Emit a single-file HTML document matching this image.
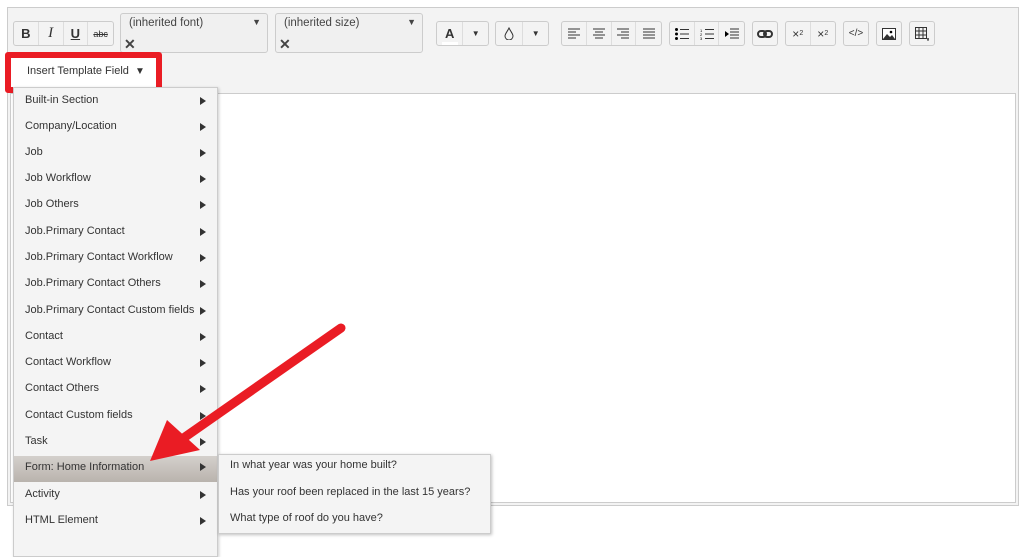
<!DOCTYPE html>
<html><head><meta charset="utf-8"><style>
*{box-sizing:border-box;margin:0;padding:0}
body{width:1031px;height:538px;background:#fff;position:relative;overflow:hidden;font-family:"Liberation Sans",sans-serif;color:#333}
.abs{position:absolute}
.panel{left:7px;top:7px;width:1012px;height:499px;background:#f3f3f3;border:1px solid #ccc}
.editor{left:10px;top:93px;width:1006px;height:410px;background:#fff;border:1px solid #ccc}
.grp{position:absolute;top:21px;height:25px;border:1px solid #ccc;border-radius:3px;background:#f3f3f3;display:flex}
.grp div{width:25px;height:23px;border-right:1px solid #ddd;display:flex;align-items:center;justify-content:center;font-size:13px;color:#333}
.grp div:last-child{border-right:none}
.sel{position:absolute;top:13px;height:40px;width:148px;border:1px solid #ccc;border-radius:3px;background:#f0f0f0;font-size:11.5px;color:#444}
.sel .t{position:absolute;left:8px;top:3px}
.sel .a{position:absolute;right:6px;top:3px;font-size:9px}
.sel .x{position:absolute;left:3px;top:22px;font-size:14px;font-weight:bold}
.menu{left:13px;top:87px;width:205px;height:470px;background:#f4f4f4;border:1px solid #ccc;box-shadow:1px 1px 3px rgba(0,0,0,.2)}
.mi{position:absolute;left:0;width:203px;height:26px;font-size:11px;color:#333;padding-left:11px;line-height:20px;white-space:nowrap}
.mi:after{content:"";position:absolute;right:11px;top:7px;border-left:6px solid #333;border-top:4px solid transparent;border-bottom:4px solid transparent}
.hi{background:linear-gradient(#d4d0cc,#b9b3ad)}
.sub{left:218px;top:454px;width:273px;height:80px;background:#f4f4f4;border:1px solid #ccc;box-shadow:1px 1px 3px rgba(0,0,0,.25)}
.si{position:absolute;left:11px;font-size:11px;color:#333;white-space:nowrap}
</style></head><body>
<div class="abs panel"></div>
<div class="abs editor"></div>
<div class="grp" style="left:13px;width:101px"><div style="font-weight:bold">B</div><div style="font-style:italic;font-family:'Liberation Serif',serif;font-size:15px">I</div><div style="text-decoration:underline;font-weight:bold">U</div><div style="text-decoration:line-through;font-size:9px">abc</div></div>
<div class="sel" style="left:120px"><span class="t">(inherited font)</span><span class="a">▼</span><span class="x">✕</span></div>
<div class="sel" style="left:275px"><span class="t">(inherited size)</span><span class="a">▼</span><span class="x">✕</span></div>
<div class="grp" style="left:436px;width:53px"><div style="font-weight:bold;width:27px;flex-direction:column;padding-top:3px">A<span style="display:block;width:16px;height:3px;background:#fff;margin-top:1px"></span></div><div style="font-size:8px">▼</div></div>
<div class="grp" style="left:495px;width:54px"><div style="width:28px"><svg width="10" height="13"><path d="M5 1C3 5 1 7 1 9a4 4 0 0 0 8 0C9 7 7 5 5 1z" fill="none" stroke="#333"/></svg></div><div style="font-size:8px">▼</div></div>
<div class="grp" style="left:561px;width:101px">
<div><svg width="12" height="11"><path d="M0 1h12M0 4h8M0 7h12M0 10h8" stroke="#333"/></svg></div>
<div><svg width="12" height="11"><path d="M0 1h12M2 4h8M0 7h12M2 10h8" stroke="#333"/></svg></div>
<div><svg width="12" height="11"><path d="M0 1h12M4 4h8M0 7h12M4 10h8" stroke="#333"/></svg></div>
<div><svg width="12" height="11"><path d="M0 1h12M0 4h12M0 7h12M0 10h12" stroke="#333"/></svg></div></div>
<div class="grp" style="left:669px;width:76px">
<div><svg width="14" height="12"><path d="M5 1.5h9M5 6h9M5 10.5h9" stroke="#333"/><circle cx="1.5" cy="1.5" r="1.5"/><circle cx="1.5" cy="6" r="1.5"/><circle cx="1.5" cy="10.5" r="1.5"/></svg></div>
<div><svg width="14" height="12"><path d="M5 1.5h9M5 6h9M5 10.5h9" stroke="#333"/><text x="0" y="4" font-size="4">1</text><text x="0" y="8" font-size="4">2</text><text x="0" y="12" font-size="4">3</text></svg></div>
<div><svg width="14" height="12"><path d="M5 1h9M5 4h9M5 7h9M5 10h9" stroke="#333"/><path d="M0 3l4 3-4 3z"/></svg></div></div>
<div class="grp" style="left:752px;width:26px"><div><svg width="16" height="8"><rect x="1" y="1" width="8" height="6" rx="3" fill="none" stroke="#333" stroke-width="2"/><rect x="7" y="1" width="8" height="6" rx="3" fill="none" stroke="#333" stroke-width="2"/></svg></div></div>
<div class="grp" style="left:785px;width:51px"><div style="font-size:12px">×<sub style="font-size:7px">2</sub></div><div style="font-size:12px">×<sup style="font-size:7px">2</sup></div></div>
<div class="grp" style="left:843px;width:26px"><div style="font-size:10px">&lt;/&gt;</div></div>
<div class="grp" style="left:876px;width:26px"><div><svg width="14" height="12"><rect x=".5" y=".5" width="13" height="11" fill="#fff" stroke="#333"/><path d="M1 11l4-5 3 3 2-2 3 4z" fill="#333"/><circle cx="9" cy="4" r="1.3"/></svg></div></div>
<div class="grp" style="left:909px;width:26px"><div><svg width="14" height="14"><path d="M.5 .5h11v11h-11zM.5 4h11M.5 8h11M4 .5v11M8 .5v11M12 12h2M13 11v3" stroke="#333" fill="none"/></svg></div></div>
<div class="abs" style="left:5px;top:52px;width:157px;height:41px;border:6px solid #ea1c24;border-radius:3px;background:#fff"></div>
<div class="abs" style="left:27px;top:65px;font-size:11px;color:#333">Insert Template Field&nbsp;&nbsp;<span style="font-size:10px">▼</span></div>
<div class="abs menu">
<div class="mi" style="top:2px">Built-in Section</div>
<div class="mi" style="top:28px">Company/Location</div>
<div class="mi" style="top:54px">Job</div>
<div class="mi" style="top:80px">Job Workflow</div>
<div class="mi" style="top:106px">Job Others</div>
<div class="mi" style="top:133px">Job.Primary Contact</div>
<div class="mi" style="top:159px">Job.Primary Contact Workflow</div>
<div class="mi" style="top:185px">Job.Primary Contact Others</div>
<div class="mi" style="top:212px">Job.Primary Contact Custom fields</div>
<div class="mi" style="top:238px">Contact</div>
<div class="mi" style="top:264px">Contact Workflow</div>
<div class="mi" style="top:290px">Contact Others</div>
<div class="mi" style="top:317px">Contact Custom fields</div>
<div class="mi" style="top:343px">Task</div>
<div class="mi hi" style="top:368px;height:26px;line-height:23px">Form: Home Information</div>
<div class="mi" style="top:396px">Activity</div>
<div class="mi" style="top:422px">HTML Element</div>
</div>
<div class="abs sub">
<div class="si" style="top:4px">In what year was your home built?</div>
<div class="si" style="top:31px">Has your roof been replaced in the last 15 years?</div>
<div class="si" style="top:57px">What type of roof do you have?</div>
</div>
<svg class="abs" style="left:0;top:0" width="1031" height="538"><line x1="341" y1="328" x2="185" y2="437" stroke="#ea1c24" stroke-width="9" stroke-linecap="round"/><path d="M150 461L167 420L200 450Z" fill="#ea1c24"/></svg>
</body></html>
